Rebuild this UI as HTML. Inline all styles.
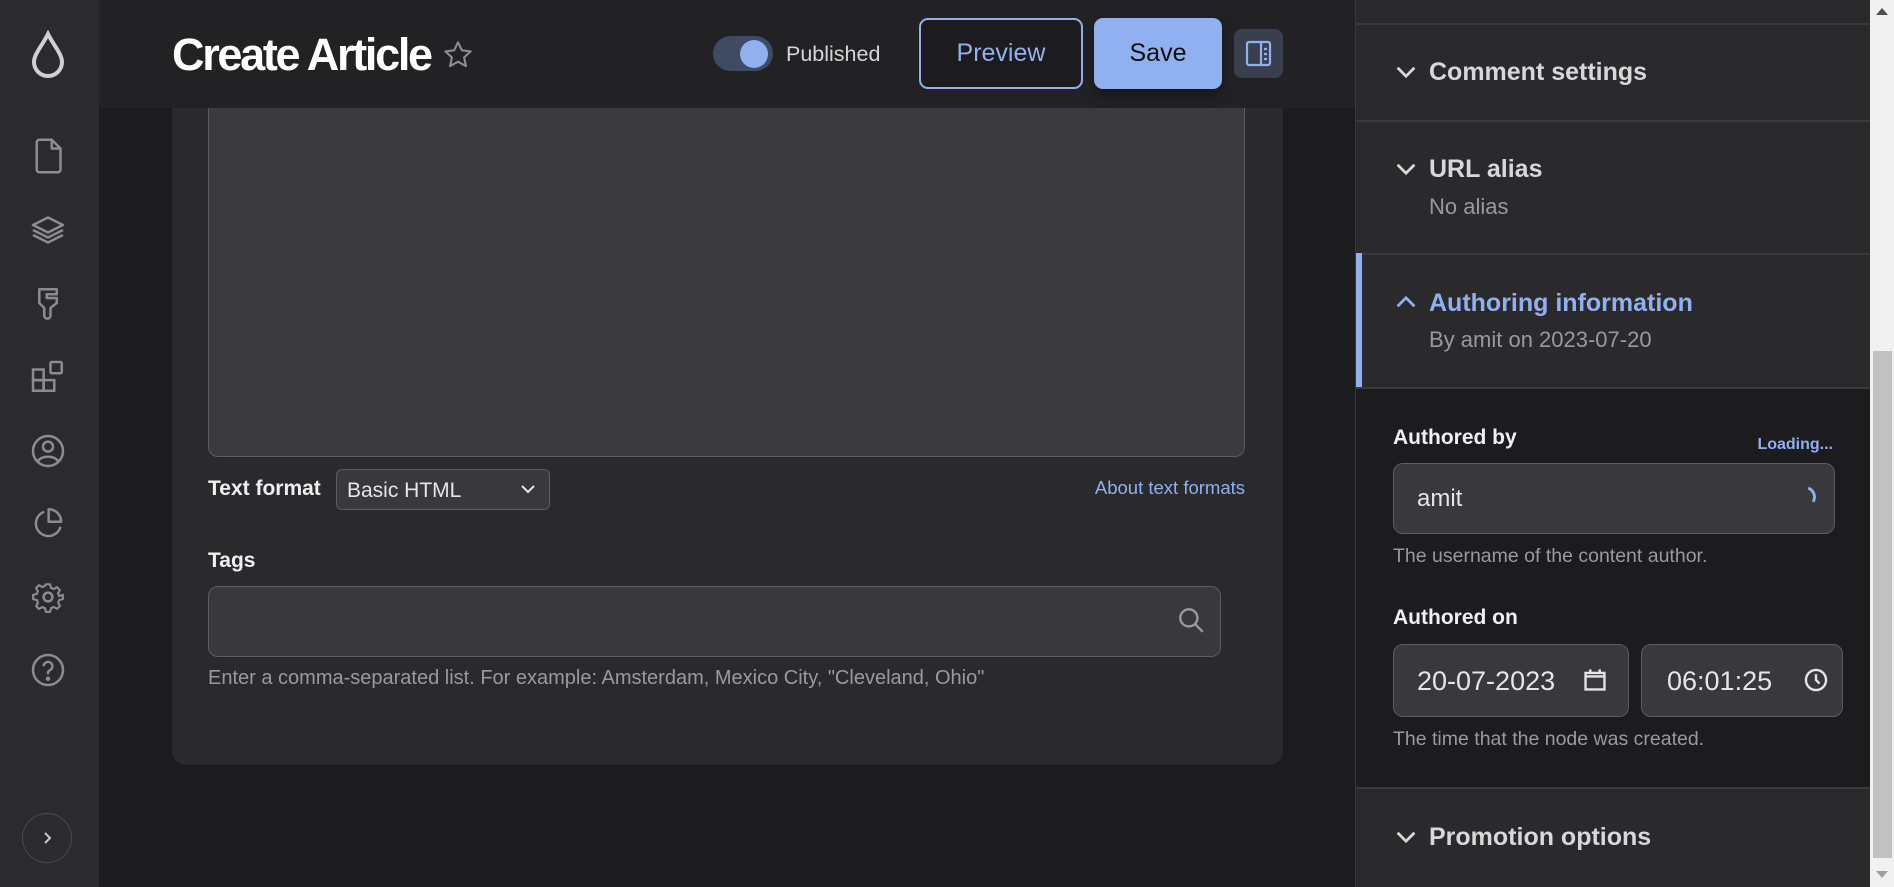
<!DOCTYPE html>
<html><head><meta charset="utf-8"><style>
*{box-sizing:border-box;margin:0;padding:0}
body{width:1894px;height:887px;overflow:hidden;background:#1c1c1e;font-family:"Liberation Sans",sans-serif;color:#e6e6e8;position:relative}
.abs{position:absolute}
#side{left:0;top:0;width:99px;height:887px;background:#2b2b2e}
.ic{position:absolute;left:28px;width:40px;height:40px}
#hdr{left:99px;top:0;width:1256px;height:108px;background:#222225}
#card{left:172px;top:108px;width:1111px;height:657px;background:#2a2a2d;border-radius:0 0 14px 14px}
#right{left:1355px;top:0;width:515px;height:887px;background:#2a2a2d;border-left:1px solid #3a3a3e}
.line{position:absolute;left:0;right:0;height:2px;background:#3a3a3e}
.sh{position:absolute;left:73px;font-size:25px;font-weight:bold;color:#d8d8da}
.sub{position:absolute;left:73px;font-size:22px;color:#9a9a9e}
.chev{position:absolute;left:36px;width:28px;height:28px}
.inp{position:absolute;background:#38383d;border:1px solid #5c5c62;border-radius:10px}
.lbl{position:absolute;font-size:20px;font-weight:bold;color:#f0f0f2}
.help{position:absolute;font-size:19.5px;color:#9a9a9e}
</style></head><body>
<div id="side" class="abs">
<svg class="abs" style="left:28px;top:30px" width="40" height="50" viewBox="0 0 40 50"><path d="M20 4 C14 16 6 24 6 32 a14 14 0 0 0 28 0 C34 24 26 16 20 4Z" fill="none" stroke="#d0d0d2" stroke-width="4"/></svg>
<svg class="ic" style="top:136px" viewBox="0 0 32 32" fill="none" stroke="#8c8c90" stroke-width="2" stroke-linejoin="round"><path d="M9 3h10l7 7v17a2 2 0 0 1-2 2H9a2 2 0 0 1-2-2V5a2 2 0 0 1 2-2z M19 3v7h7"/></svg>
<svg class="ic" style="top:210px" viewBox="0 0 32 32" fill="none" stroke="#8c8c90" stroke-width="2" stroke-linejoin="round"><path d="M16 6l12 6-12 6-12-6z M4 16l12 6 12-6 M4 20l12 6 12-6"/></svg>
<svg class="ic" style="top:283px" viewBox="0 0 32 32" fill="none" stroke="#8c8c90" stroke-width="2" stroke-linejoin="round"><path d="M9 5h14v4h-8v3h8v4l-5 4v6a2.5 2.5 0 0 1-5 0v-6l-4-4z"/></svg>
<svg class="ic" style="top:357px" viewBox="0 0 32 32" fill="none" stroke="#8c8c90" stroke-width="2"><rect x="4" y="10" width="8.5" height="8.5"/><rect x="4" y="18.5" width="8.5" height="8.5"/><rect x="12.5" y="18.5" width="8.5" height="8.5"/><rect x="18" y="4" width="9" height="9" rx="1"/></svg>
<svg class="ic" style="top:431px" viewBox="0 0 32 32" fill="none" stroke="#8c8c90" stroke-width="2"><circle cx="16" cy="16" r="12"/><circle cx="16" cy="12.5" r="4"/><path d="M8 24c3-4.5 13-4.5 16 0"/></svg>
<svg class="ic" style="top:503px" viewBox="0 0 32 32" fill="none" stroke="#8c8c90" stroke-width="2" stroke-linejoin="round"><path d="M13 7a10 10 0 1 0 13 12"/><path d="M16.5 5a10 10 0 0 1 10 10h-10z"/></svg>
<svg class="ic" style="top:577px" viewBox="0 0 32 32" fill="none" stroke="#8c8c90" stroke-width="2" stroke-linejoin="round"><circle cx="16" cy="16" r="3.5"/><path d="M14 4h4l.8 3.4 2.6 1.1 3-1.8 2.8 2.8-1.8 3 1.1 2.6L30 14v4l-3.4.8-1.1 2.6 1.8 3-2.8 2.8-3-1.8-2.6 1.1L18 30h-4l-.8-3.4-2.6-1.1-3 1.8-2.8-2.8 1.8-3-1.1-2.6L2 18v-4l3.4-.8 1.1-2.6-1.8-3 2.8-2.8 3 1.8 2.6-1.1z" transform="translate(2.4 2.4) scale(.85)"/></svg>
<svg class="ic" style="top:650px" viewBox="0 0 32 32" fill="none" stroke="#8c8c90" stroke-width="2"><circle cx="16" cy="16" r="12"/><path d="M12.5 13a3.5 3.5 0 1 1 5 3.2c-1 .5-1.5 1.2-1.5 2.3v1"/><circle cx="16" cy="23" r=".8" fill="#8c8c90"/></svg>
<div class="abs" style="left:22px;top:813px;width:50px;height:50px;border-radius:50%;border:1px solid #4a4a4e"></div>
<svg class="abs" style="left:39px;top:830px" width="16" height="16" viewBox="0 0 16 16" fill="none" stroke="#c8c8ca" stroke-width="2"><path d="M6 3l5 5-5 5"/></svg>
</div>

<div id="card" class="abs">
  <div class="abs" style="left:36px;top:-10px;width:1037px;height:359px;background:#3a3a3f;border:1px solid #5c5c62;border-top:none;border-radius:0 0 10px 10px"></div>
  <div class="lbl" style="left:36px;top:369px;font-size:21px">Text format</div>
  <div class="abs" style="left:164px;top:361px;width:214px;height:41px;background:#38383d;border:1px solid #5c5c62;border-radius:6px;font-size:21px;color:#e6e6e8;padding:9px 10px">Basic HTML</div>
  <svg class="abs" style="left:348px;top:375px" width="16" height="12" viewBox="0 0 16 12" fill="none" stroke="#e6e6e8" stroke-width="2"><path d="M2 3l6 6 6-6"/></svg>
  <div class="abs" style="right:38px;top:369px;font-size:18.5px;color:#8fb0f0">About text formats</div>
  <div class="lbl" style="left:36px;top:441px;font-size:21px">Tags</div>
  <div class="inp" style="left:36px;top:478px;width:1013px;height:71px"></div>
  <svg class="abs" style="left:1004px;top:497px" width="30" height="30" viewBox="0 0 28 28" fill="none" stroke="#9a9a9e" stroke-width="2.2"><circle cx="12" cy="12" r="8"/><path d="M18 18l7 7"/></svg>
  <div class="help" style="left:36px;top:559px;font-size:20px">Enter a comma-separated list. For example: Amsterdam, Mexico City, "Cleveland, Ohio"</div>
</div>

<div id="hdr" class="abs">
  <div class="abs" style="left:73px;top:29px;font-size:45px;font-weight:bold;letter-spacing:-2.3px;color:#fff">Create Article</div>
  <svg class="abs" style="left:343px;top:39px" width="32" height="32" viewBox="0 0 24 24" fill="none" stroke="#8c8c90" stroke-width="1.6" stroke-linejoin="round"><path d="M12 2.5l2.9 6 6.6.8-4.9 4.5 1.3 6.5L12 17l-5.9 3.3 1.3-6.5L2.5 9.3l6.6-.8z"/></svg>
  <div class="abs" style="left:614px;top:36px;width:60px;height:35px;border-radius:18px;background:#3f4a63"></div>
  <div class="abs" style="left:641px;top:40px;width:28px;height:28px;border-radius:50%;background:#91b0f0"></div>
  <div class="abs" style="left:687px;top:42px;font-size:21.5px;color:#d6d6d8">Published</div>
  <div class="abs" style="left:820px;top:18px;width:164px;height:71px;border:2px solid #91b0f0;border-radius:9px;background:#1c1c1e;color:#91b0f0;font-size:25px;text-align:center;line-height:67px">Preview</div>
  <div class="abs" style="left:995px;top:18px;width:128px;height:71px;border-radius:9px;background:#91b0f0;color:#111;font-size:25px;text-align:center;line-height:71px;box-shadow:0 6px 12px rgba(0,0,0,.35)">Save</div>
  <div class="abs" style="left:1135px;top:29px;width:49px;height:49px;border-radius:8px;background:#3a3f4d"></div>
  <svg class="abs" style="left:1146px;top:40px" width="27" height="27" viewBox="0 0 27 27" fill="none" stroke="#91b0f0" stroke-width="2.2"><rect x="2" y="2" width="23" height="23" rx="2"/><path d="M16 2v23 M19 9h3 M19 14h3 M19 19h3"/></svg>
</div>

<div id="right" class="abs">
  <div class="line" style="top:23px"></div>
  <svg class="chev" style="top:58px" viewBox="0 0 20 20" fill="none" stroke="#d8d8da" stroke-width="2"><path d="M4 7l6 6 6-6"/></svg>
  <div class="sh" style="top:58px">Comment settings</div>
  <div class="line" style="top:120px"></div>
  <svg class="chev" style="top:155px" viewBox="0 0 20 20" fill="none" stroke="#d8d8da" stroke-width="2"><path d="M4 7l6 6 6-6"/></svg>
  <div class="sh" style="top:155px">URL alias</div>
  <div class="sub" style="top:194px">No alias</div>
  <div class="line" style="top:253px"></div>
  <div class="abs" style="left:0;top:253px;width:6px;height:135px;background:#91b0f0"></div>
  <svg class="chev" style="top:288px" viewBox="0 0 20 20" fill="none" stroke="#91b0f0" stroke-width="2"><path d="M4 13l6-6 6 6"/></svg>
  <div class="sh" style="top:289px;color:#91b0f0">Authoring information</div>
  <div class="sub" style="top:327px">By amit on 2023-07-20</div>
  <div class="abs" style="left:0;right:0;top:387px;height:402px;background:#1c1c1f;border-top:2px solid #3a3a3e;border-bottom:2px solid #3a3a3e"></div>
  <div class="lbl" style="left:37px;top:426px;font-size:21px">Authored by</div>
  <div class="abs" style="right:37px;top:436px;font-size:16px;font-weight:bold;color:#8fb0f0">Loading...</div>
  <div class="inp" style="left:37px;top:463px;width:442px;height:71px"></div>
  <div class="abs" style="left:61px;top:485px;font-size:24px;color:#e6e6e8">amit</div>
  <svg class="abs" style="left:436px;top:484px" width="26" height="26" viewBox="0 0 22 22" fill="none" stroke="#91b0f0" stroke-width="2.4"><path d="M11 3a8 8 0 0 1 0 16" transform="rotate(20 11 11)" stroke-dasharray="14 40"/></svg>
  <div class="help" style="left:37px;top:545px">The username of the content author.</div>
  <div class="lbl" style="left:37px;top:606px;font-size:21px">Authored on</div>
  <div class="inp" style="left:37px;top:644px;width:236px;height:73px"></div>
  <div class="abs" style="left:61px;top:666px;font-size:27px;color:#e6e6e8">20-07-2023</div>
  <svg class="abs" style="left:226px;top:667px" width="26" height="26" viewBox="0 0 22 22" fill="none" stroke="#e6e6e8" stroke-width="2"><rect x="3" y="5" width="16" height="14"/><path d="M3 8h16 M7 2v4 M15 2v4"/></svg>
  <div class="inp" style="left:285px;top:644px;width:202px;height:73px"></div>
  <div class="abs" style="left:311px;top:666px;font-size:27px;color:#e6e6e8">06:01:25</div>
  <svg class="abs" style="left:447px;top:667px" width="26" height="26" viewBox="0 0 22 22" fill="none" stroke="#e6e6e8" stroke-width="2"><circle cx="11" cy="11" r="8.5"/><path d="M11 6v5l3 3"/></svg>
  <div class="help" style="left:37px;top:728px">The time that the node was created.</div>
  <svg class="chev" style="top:823px" viewBox="0 0 20 20" fill="none" stroke="#d8d8da" stroke-width="2"><path d="M4 7l6 6 6-6"/></svg>
  <div class="sh" style="top:823px">Promotion options</div>
</div>

<div class="abs" style="left:1870px;top:0;width:24px;height:887px;background:#f1f1f1"></div>
<div class="abs" style="left:1873px;top:351px;width:19px;height:507px;background:#c1c1c1"></div>
<svg class="abs" style="left:1876px;top:8px" width="12" height="8"><path d="M0 7h12L6 0z" fill="#505050"/></svg>
<svg class="abs" style="left:1876px;top:871px" width="12" height="8"><path d="M0 0h12L6 7z" fill="#a0a0a0"/></svg>
</body></html>
